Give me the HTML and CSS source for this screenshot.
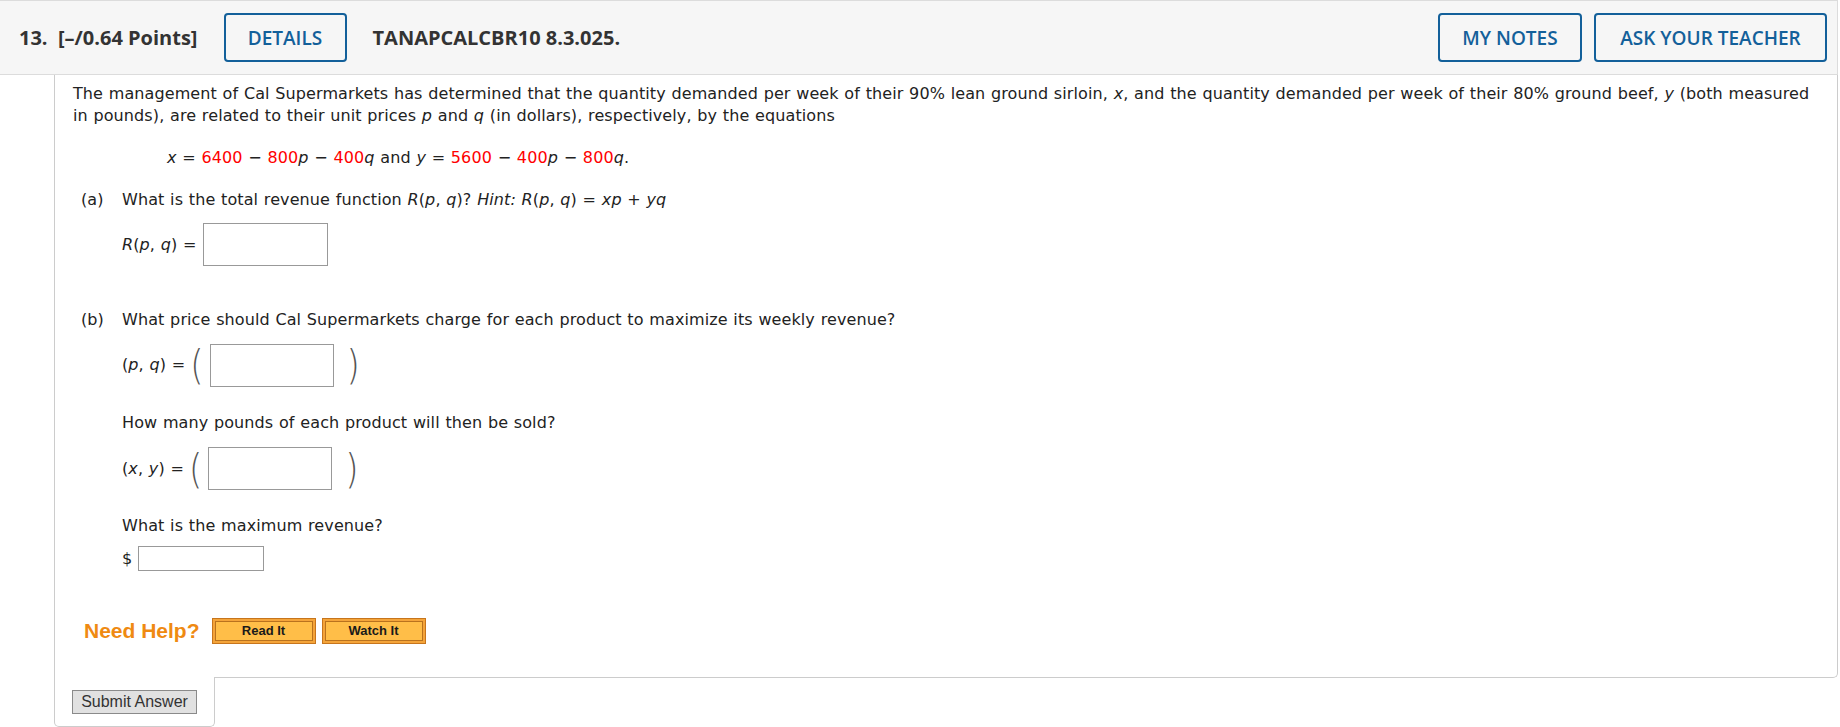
FILE: index.html
```html
<!DOCTYPE html>
<html>
<head>
<meta charset="utf-8">
<link rel="stylesheet" href="styles.css">
</head>
<body>
<div class="question">
  <div class="qhead">
    <div class="qtitle">13.&nbsp; [–/0.64 Points]</div>
    <button class="hbtn details">DETAILS</button>
    <div class="qref">TANAPCALCBR10 8.3.025.</div>
    <div class="spacer"></div>
    <button class="hbtn notes">MY NOTES</button>
    <button class="hbtn ask">ASK YOUR TEACHER</button>
  </div>
  <div class="qbody">
    <p class="intro">The management of Cal Supermarkets has determined that the quantity demanded per week of their 90% lean ground sirloin, <i>x</i>, and the quantity demanded per week of their 80% ground beef, <i>y</i> (both measured in pounds), are related to their unit prices <i>p</i> and <i>q</i> (in dollars), respectively, by the equations</p>
    <p class="eq"><i>x</i> = <span class="red">6400</span> − <span class="red">800</span><i>p</i> − <span class="red">400</span><i>q</i> and <i>y</i> = <span class="red">5600</span> − <span class="red">400</span><i>p</i> − <span class="red">800</span><i>q</i>.</p>

    <div class="part part-a">
      <div class="plabel">(a)</div>
      <div class="pcontent">
        <div class="ptext">What is the total revenue function <i>R</i>(<i>p</i>, <i>q</i>)? <i>Hint: R</i>(<i>p</i>, <i>q</i>) = <i>xp</i> + <i>yq</i></div>
        <div class="arow row-r"><span><i>R</i>(<i>p</i>, <i>q</i>) =</span><span class="box box-r"></span></div>
      </div>
    </div>

    <div class="part part-b">
      <div class="plabel">(b)</div>
      <div class="pcontent">
        <div class="ptext">What price should Cal Supermarkets charge for each product to maximize its weekly revenue?</div>
        <div class="arow row-pq"><span>(<i>p</i>, <i>q</i>) =</span><span class="paren">(</span><span class="box box-pair"></span><span class="paren rp">)</span></div>
        <div class="ptext sub">How many pounds of each product will then be sold?</div>
        <div class="arow row-xy"><span>(<i>x</i>, <i>y</i>) =</span><span class="paren">(</span><span class="box box-pair"></span><span class="paren rp">)</span></div>
        <div class="ptext sub">What is the maximum revenue?</div>
        <div class="arow row-d"><span>$</span><span class="box box-d"></span></div>
      </div>
    </div>

    <div class="help">
      <span class="need">Need Help?</span>
      <span class="hb"><span class="hbi">Read It</span></span>
      <span class="hb"><span class="hbi">Watch It</span></span>
    </div>
  </div>
  <div class="submit-tab">
    <button class="submit">Submit Answer</button>
  </div>
</div>
</body>
</html>
```

FILE: styles.css
```css
html, body {
  margin: 0;
  padding: 0;
  background: #fff;
}
.question {
  width: 1838px;
}
.qhead {
  box-sizing: border-box;
  height: 75px;
  display: flex;
  align-items: center;
  background: #f6f6f6;
  border: 1px solid #dcdcdc;
  border-left: none;
  padding: 0 10px 0 19px;
  font-family: "Open Sans", sans-serif;
  color: #333;
}
.qtitle {
  font-weight: 700;
  font-size: 20px;
  white-space: pre;
}
.qref {
  font-weight: 700;
  font-size: 20px;
}
.spacer { flex: 1; }
.hbtn {
  box-sizing: border-box;
  height: 49px;
  background: #f6f6f6;
  border: 2px solid #13609a;
  border-radius: 4px;
  color: #13609a;
  font-family: "Open Sans", sans-serif;
  font-size: 19px;
  font-weight: 600;
  padding: 0;
}
.details { width: 123px; margin: 0 26px 0 26px; }
.notes { width: 144px; margin-right: 12px; }
.ask { width: 233px; }

.qbody {
  box-sizing: border-box;
  margin-left: 54px;
  height: 603px;
  border: 1px solid #cccccc;
  border-top: none;
  border-bottom-right-radius: 5px;
  padding: 8px 18px 0 18px;
  font-family: "DejaVu Sans", Verdana, sans-serif;
  font-size: 16px;
  letter-spacing: 0.1px;
  word-spacing: 0.5px;
  line-height: 22px;
  color: #222;
}
.qbody i { font-style: italic; }
.intro { margin: 0; }
.eq { margin: 20px 0 0 94px; }
.red { color: #f00; }

.part {
  display: flex;
  margin-left: 8px;
}
.part-a { margin-top: 20px; }
.part-b { margin-top: 43px; }
.plabel { width: 41px; }
.pcontent { display: flex; flex-direction: column; align-items: flex-start; }
.ptext { height: 22px; white-space: nowrap; }
.ptext.sub { margin-top: 25px; }
.arow {
  display: flex;
  align-items: center;
}
.box {
  box-sizing: border-box;
  background: #fff;
  border: 1px solid #999;
  display: block;
}
.row-r { margin-top: 12px; height: 43px; }
.box-r { width: 125px; height: 43px; margin-left: 6px; }
.row-pq { margin-top: 12px; height: 44px; }
.row-xy { margin-top: 13px; height: 43px; }
.box-pair { width: 124px; height: 43px; }
.paren {
  font-family: "DejaVu Sans", sans-serif;
  font-weight: 200;
  font-size: 34px;
  line-height: 40px;
  color: #555;
  margin: 0 6px 0 5px;
  transform: scaleY(1.2);
  letter-spacing: 0;
}
.rp { margin-left: 13px; }
.row-d { margin-top: 9px; height: 25px; }
.box-d { width: 126px; height: 25px; margin-left: 6px; }

.help {
  display: flex;
  align-items: center;
  margin-top: 47px;
  margin-left: 11px;
  height: 26px;
  letter-spacing: 0;
  word-spacing: 0;
}
.need {
  font-family: "Liberation Sans", Arial, sans-serif;
  font-weight: 700;
  font-size: 21px;
  color: #ef8a12;
  margin-right: 12px;
}
.hb {
  box-sizing: border-box;
  width: 104px;
  height: 26px;
  background: #f4a43a;
  border: 1px solid #c7751c;
  padding: 2px;
  margin-right: 6px;
  display: flex;
}
.hbi {
  box-sizing: border-box;
  flex: 1;
  background: #ffbe48;
  border: 1px solid #b9721e;
  font-family: "Liberation Sans", Arial, sans-serif;
  font-weight: 700;
  font-size: 13px;
  color: #1a1a1a;
  display: flex;
  align-items: center;
  justify-content: center;
}

.submit-tab {
  box-sizing: border-box;
  position: relative;
  margin-left: 54px;
  margin-top: -1px;
  width: 161px;
  height: 50px;
  background: #fff;
  border: 1px solid #cccccc;
  border-top: none;
  border-radius: 0 0 5px 5px;
  padding: 13px 0 0 17px;
}
.submit {
  box-sizing: border-box;
  width: 125px;
  height: 24px;
  background: #e1e1e1;
  border: 1px solid #8a8a8a;
  font-family: "Liberation Sans", Arial, sans-serif;
  font-size: 16px;
  color: #333;
  padding: 0;
}
```
